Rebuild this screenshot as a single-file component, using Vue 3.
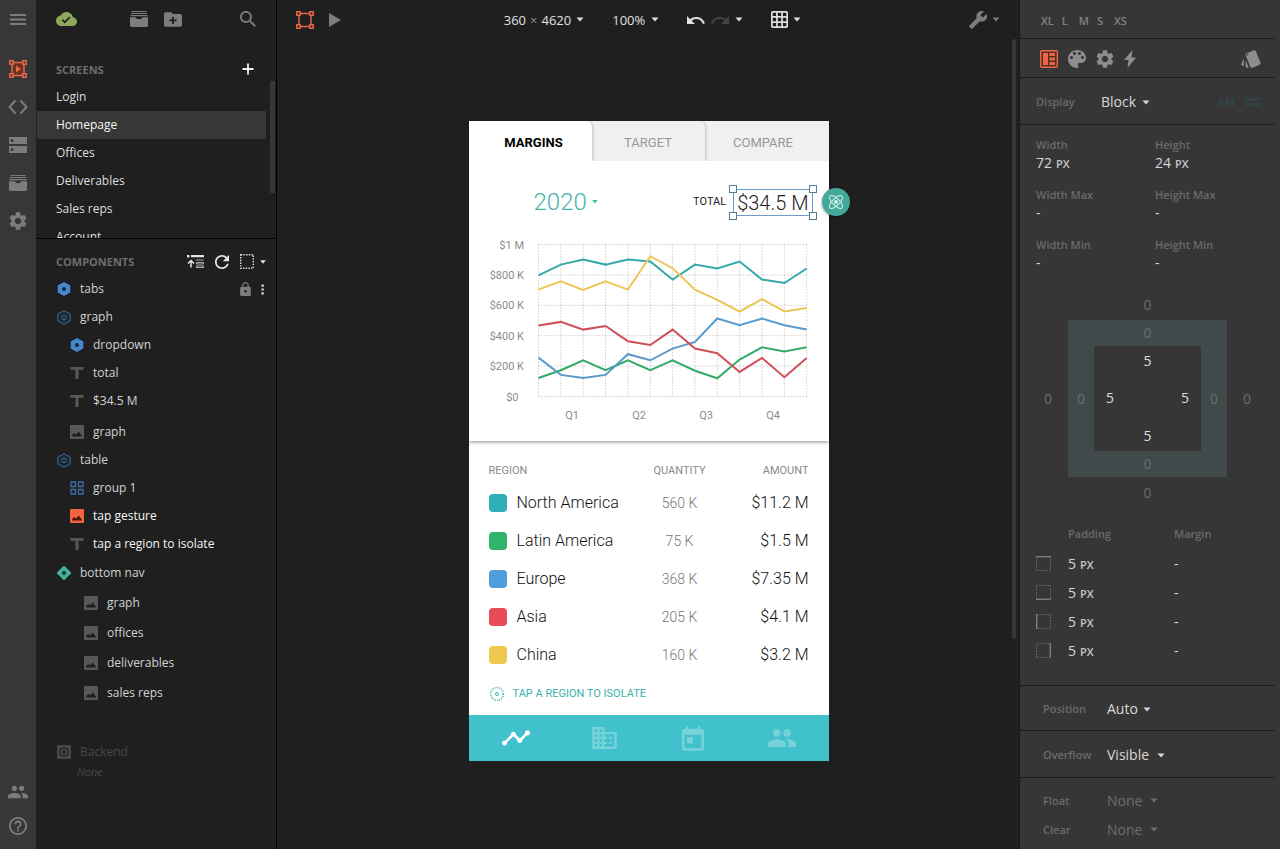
<template>
  <div class="editor">
    <!-- left rail -->
    <nav class="rail" aria-label="Workspace">
      <button class="rail-btn first" aria-label="Menu"><Icon name="menu" /></button>
      <button class="rail-btn active" aria-label="Design"><Icon name="design" /></button>
      <button class="rail-btn" aria-label="Code"><Icon name="code" /></button>
      <button class="rail-btn" aria-label="Data"><Icon name="data" /></button>
      <button class="rail-btn" aria-label="Library"><Icon name="drawer" /></button>
      <button class="rail-btn" aria-label="Settings"><Icon name="gear" /></button>
      <div class="rail-bottom">
        <button class="rail-btn low" aria-label="Team"><Icon name="people" /></button>
        <button class="rail-btn low" aria-label="Help"><Icon name="help" /></button>
      </div>
    </nav>

    <!-- screens + components -->
    <aside class="explorer">
      <header class="explorer-top">
        <button class="cloud" aria-label="Saved"><Icon name="cloud" /></button>
        <div class="explorer-mid">
          <button aria-label="Library"><Icon name="drawer" /></button>
          <button aria-label="New folder"><Icon name="folder" /></button>
        </div>
        <button aria-label="Search"><Icon name="search" /></button>
      </header>

      <section class="screens">
        <div class="section-head">
          <h2>SCREENS</h2>
          <button class="add" aria-label="Add screen"><Icon name="plus" /></button>
        </div>
        <ul class="screen-list">
          <li v-for="s in screens" :key="s">
            <button class="screen" :class="{ selected: s === current }" @click="current = s">{{ s }}</button>
          </li>
        </ul>
        <span class="thumb"></span>
      </section>

      <section class="components">
        <div class="section-head">
          <h2>COMPONENTS</h2>
          <div class="head-tools">
            <button aria-label="Collapse"><Icon name="collapse" /></button>
            <button aria-label="Refresh"><Icon name="refresh" /></button>
            <button class="with-caret" aria-label="Selection"><Icon name="marquee" /><Icon name="caretSmall" /></button>
          </div>
        </div>
        <ul class="tree">
          <li
            v-for="n in nodes"
            :key="n.id"
            class="node"
            :class="['level-' + n.level, n.icon, { bright: n.bright, hot: n.hot, loose: n.loose, spaced: n.spaced }]"
          >
            <Icon :name="n.icon" class="node-icon" />
            <span>{{ n.label }}</span>
            <span v-if="n.locked" class="node-tools">
              <Icon name="lock" />
              <Icon name="dots" class="dots" />
            </span>
          </li>
        </ul>
        <div class="backend">
          <div class="backend-title"><Icon name="backend" /><span>Backend</span></div>
          <em>None</em>
        </div>
      </section>
    </aside>

    <!-- canvas -->
    <main class="canvas">
      <div class="toolbar">
        <div class="tools-left">
          <button class="orange" aria-label="Edit"><Icon name="artboard" /></button>
          <button class="dim" aria-label="Preview"><Icon name="play" /></button>
        </div>
        <div class="tools-center">
          <button class="tool-text">360 <span class="times">×</span> 4620<Icon name="caret" /></button>
          <span class="pick zoom">
            <select aria-label="Zoom"><option>100%</option><option>50%</option></select>
            <Icon name="caret" />
          </span>
          <div class="history">
            <button aria-label="Undo"><Icon name="undo" /></button>
            <button class="faint" aria-label="Redo"><Icon name="redo" /></button>
            <button aria-label="History"><Icon name="caret" /></button>
          </div>
          <button class="grid-btn" aria-label="Grid"><Icon name="grid" /><Icon name="caret" /></button>
        </div>
        <div class="tools-right">
          <button class="dim wrench" aria-label="Tools"><Icon name="wrench" /><Icon name="caret" /></button>
        </div>
      </div>

      <div class="stage">
        <div class="phone">
          <div class="card">
            <div class="tabs">
              <button class="tab on">MARGINS</button>
              <button class="tab">TARGET</button>
              <button class="tab">COMPARE</button>
            </div>
            <div class="summary">
              <button class="year">2020<Icon name="caretTiny" /></button>
              <div class="total">
                <span class="total-label">TOTAL</span>
                <span class="picked">$34.5 M
                  <i class="handle tl"></i><i class="handle tr"></i>
                  <i class="handle bl"></i><i class="handle br"></i>
                </span>
              </div>
              <button class="badge" aria-label="Interaction"><Icon name="atom" /></button>
            </div>
            <svg class="chart" viewBox="0 0 360 210">
              <g class="grid-lines">
                <line v-for="i in 6" :key="'h' + i" :x1="plot.x" :x2="plot.x + 12 * plot.dx" :y1="gridY(i - 1)" :y2="gridY(i - 1)" />
                <line v-for="i in 13" :key="'v' + i" :x1="plotX(i - 1)" :x2="plotX(i - 1)" :y1="plot.y" :y2="plot.y + plot.h" />
              </g>
              <text v-for="(t, i) in yTicks" :key="t" x="55" :y="gridY(i) + 4" text-anchor="end">{{ t }}</text>
              <text v-for="(q, i) in quarters" :key="q" :x="plotX(1.5 + i * 3)" y="188" text-anchor="middle">{{ q }}</text>
              <polyline v-for="s in series" :key="s.color" :points="toPoints(s.values)" :stroke="s.color" />
            </svg>
          </div>

          <div class="regions">
            <table>
              <thead>
                <tr><th class="c-region">REGION</th><th class="c-qty">QUANTITY</th><th class="c-amt">AMOUNT</th></tr>
              </thead>
              <tbody>
                <tr v-for="r in regions" :key="r.name">
                  <td class="c-region">
                    <span class="region-name"><span class="swatch" :style="{ background: r.color }"></span>{{ r.name }}</span>
                  </td>
                  <td class="c-qty">{{ r.quantity }}</td>
                  <td class="c-amt">{{ r.amount }}</td>
                </tr>
              </tbody>
            </table>
            <p class="hint"><Icon name="tap" />TAP A REGION TO ISOLATE</p>
          </div>

          <nav class="bottom-nav" aria-label="App">
            <button class="current" aria-label="Graph"><Icon name="timeline" /></button>
            <button aria-label="Offices"><Icon name="domain" /></button>
            <button aria-label="Deliverables"><Icon name="today" /></button>
            <button aria-label="Sales reps"><Icon name="people" :width="28" :height="18" /></button>
          </nav>
        </div>
      </div>
      <span class="canvas-thumb"></span>
    </main>

    <!-- inspector -->
    <aside class="inspector">
      <div class="sizes">
        <button v-for="s in sizes" :key="s">{{ s }}</button>
      </div>
      <div class="panels">
        <button class="orange" aria-label="Layout"><Icon name="layout" /></button>
        <button aria-label="Style"><Icon name="palette" /></button>
        <button aria-label="Settings"><Icon name="gear" /></button>
        <button aria-label="Actions"><Icon name="bolt" /></button>
        <button class="push" aria-label="Swatches"><Icon name="swatches" /></button>
      </div>
      <div class="row display-row">
        <label for="display">Display</label>
        <span class="pick">
          <select id="display"><option>Block</option><option>Flex</option></select>
          <Icon name="caret" />
        </span>
        <span class="flow-icons"><Icon name="columns" /><Icon name="rows" /></span>
      </div>

      <div class="box">
        <div class="dims">
          <div v-for="d in dims" :key="d.label" class="dim-field">
            <label :for="d.id">{{ d.label }}</label>
            <span class="value">
              <input :id="d.id" :value="d.value" /><span v-if="d.value !== '-'" class="unit">PX</span>
            </span>
          </div>
        </div>

        <div class="model outer">
          <input v-for="s in sides" :key="s" :class="s" value="0" :aria-label="'Offset ' + s" />
          <div class="model margin">
            <input v-for="s in sides" :key="s" :class="s" value="0" :aria-label="'Margin ' + s" />
            <div class="model padding">
              <input v-for="s in sides" :key="s" :class="s" value="5" :aria-label="'Padding ' + s" />
            </div>
          </div>
        </div>

        <table class="spacing">
          <thead>
            <tr><th class="s-icon"></th><th class="s-pad">Padding</th><th>Margin</th></tr>
          </thead>
          <tbody>
            <tr v-for="s in ['top', 'bottom', 'left', 'right']" :key="s">
              <td><Icon :name="s" class="side-icon" /></td>
              <td><span class="value"><input class="one" value="5" :aria-label="'Padding ' + s" /><span class="unit">PX</span></span></td>
              <td class="s-margin"><input class="one" value="-" :aria-label="'Margin ' + s" /></td>
            </tr>
          </tbody>
        </table>
      </div>

      <div class="row position-row">
        <label for="position">Position</label>
        <span class="pick">
          <select id="position"><option>Auto</option></select>
          <Icon name="caret" />
        </span>
      </div>
      <div class="row overflow-row">
        <label for="overflow">Overflow</label>
        <span class="pick">
          <select id="overflow"><option>Visible</option></select>
          <Icon name="caret" />
        </span>
      </div>
      <div class="floats">
        <div class="row">
          <label for="float">Float</label>
          <span class="pick off">
            <select id="float"><option>None</option><option>Left</option></select>
            <Icon name="caret" />
          </span>
        </div>
        <div class="row">
          <label for="clear">Clear</label>
          <span class="pick off">
            <select id="clear"><option>None</option><option>Left</option></select>
            <Icon name="caret" />
          </span>
        </div>
      </div>
    </aside>
  </div>
</template>

<script setup>
import { h, ref } from 'vue'

const p = (d) => `<path d="${d}"/>`

// dotted square with one solid edge
const edge = (d) => [
  15, 15, '0 0 15 15',
  `<g fill="none" stroke="currentColor"><path d="M.5.5h14v14H.5z" stroke-dasharray="1.500 1.300" opacity=".8"/><path d="${d}" stroke-width="1.500"/></g>`,
]

// name: [width, height, viewBox, body]
const icons = {
  menu: [16, 11, '0 0 16 11', p('M0 0h16v2H0zM0 4.5h16v2H0zM0 9h16v2H0z')],
  design: [18, 18, '0 0 18 18', '<path d="M3 2h12v14H3z" fill="#6b3224"/><path d="M3 4v10M15 4v10M4 2.500h10M4 15.500h10" fill="none" stroke="currentColor" stroke-width="1.500"/><path d="M.8.8h3.400v3.400H.8zM13.800.8h3.400v3.400h-3.400zM.8 13.800h3.400v3.400H.8zM13.800 13.800h3.400v3.400h-3.400z" fill="#373737" stroke="currentColor" stroke-width="1.500"/><path d="M7 5.500v7l5-3.500z"/>'],
  artboard: [18, 18, '0 0 18 18', '<path d="M3 4v10M15 4v10M4 2.500h10M4 15.500h10" fill="none" stroke="currentColor" stroke-width="1.400"/><path d="M.8.8h3.400v3.400H.8zM13.800.8h3.400v3.400h-3.400zM.8 13.800h3.400v3.400H.8zM13.800 13.800h3.400v3.400h-3.400z" fill="#1f1f1f" stroke="currentColor" stroke-width="1.500"/>'],
  code: [20, 16, '0 0 20 16', '<path d="M7.500 1.500L1.500 8l6 6.500M12.500 1.500l6 6.500-6 6.500" fill="none" stroke="currentColor" stroke-width="2"/>'],
  data: [18, 16, '0 0 18 16', '<path fill-rule="evenodd" d="M0 0h18v7H0zM3 2a1.500 1.500 0 100 3 1.500 1.500 0 000-3zM0 9h18v7H0zM3 11a1.500 1.500 0 100 3 1.500 1.500 0 000-3z"/>'],
  drawer: [18, 16, '0 0 18 16', p('M1.500 0h15v1h-15zM1 2h16v1H1zM.5 4h17v1.200H.5zM0 6.200h5.500c1 2.600 6 2.600 7 0H18V15l-1 1H1l-1-1z')],
  gear: [18, 18, '2 2 20 20', p('M19.140 12.940c.04-.3.060-.61.060-.94 0-.32-.02-.64-.07-.94l2.030-1.580c.18-.14.230-.41.120-.61l-1.920-3.320c-.12-.22-.37-.29-.59-.22l-2.390.96c-.5-.38-1.030-.7-1.620-.94l-.36-2.540c-.04-.24-.24-.41-.48-.41h-3.840c-.24 0-.43.17-.47.41l-.36 2.540c-.59.24-1.130.57-1.620.94l-2.390-.96c-.22-.08-.47 0-.59.22L2.740 8.870c-.12.21-.08.47.12.61l2.030 1.580c-.05.3-.09.63-.09.94s.02.64.07.94l-2.030 1.580c-.18.14-.23.41-.12.61l1.920 3.320c.12.22.37.29.59.22l2.390-.96c.5.38 1.030.7 1.620.94l.36 2.540c.05.24.24.41.48.41h3.840c.24 0 .44-.17.47-.41l.36-2.540c.59-.24 1.130-.56 1.620-.94l2.390.96c.22.08.47 0 .59-.22l1.920-3.320c.12-.22.07-.47-.12-.61l-2.010-1.580zM12 15.600c-1.980 0-3.600-1.620-3.600-3.600s1.620-3.600 3.600-3.600 3.600 1.620 3.600 3.600-1.620 3.600-3.600 3.600z')],
  people: [20, 14, '1 5 22 14', p('M16 11c1.660 0 2.990-1.340 2.990-3S17.660 5 16 5c-1.660 0-3 1.340-3 3s1.340 3 3 3zm-8 0c1.660 0 2.990-1.340 2.990-3S9.660 5 8 5C6.340 5 5 6.340 5 8s1.340 3 3 3zm0 2c-2.330 0-7 1.170-7 3.500V19h14v-2.500c0-2.330-4.670-3.500-7-3.500zm8 0c-.29 0-.62.02-.97.05 1.160.84 1.970 1.970 1.970 3.450V19h6v-2.500c0-2.330-4.670-3.500-7-3.500z')],
  help: [18, 18, '2 2 20 20', p('M11 18h2v-2h-2v2zm1-16C6.480 2 2 6.480 2 12s4.480 10 10 10 10-4.480 10-10S17.520 2 12 2zm0 18c-4.410 0-8-3.590-8-8s3.590-8 8-8 8 3.590 8 8-3.590 8-8 8zm0-14c-2.210 0-4 1.790-4 4h2c0-1.100.9-2 2-2s2 .9 2 2c0 2-3 1.750-3 5h2c0-2.250 3-2.500 3-5 0-2.210-1.790-4-4-4z')],
  cloud: [21, 14, '0 4 24 16', p('M19.350 10.040C18.670 6.590 15.640 4 12 4 9.110 4 6.600 5.640 5.350 8.040 2.340 8.360 0 10.910 0 14c0 3.310 2.690 6 6 6h13c2.760 0 5-2.240 5-5 0-2.640-2.050-4.780-4.650-4.960zM10 17l-3.500-3.500 1.410-1.410L10 14.170 15.180 9l1.410 1.410L10 17z')],
  folder: [18, 15, '2 4 20 16', p('M20 6h-8l-2-2H4c-1.110 0-2 .89-2 2v12c0 1.110.89 2 2 2h16c1.110 0 2-.89 2-2V8c0-1.110-.89-2-2-2zm-4 8h-3v3h-2v-3H8v-2h3V9h2v3h3v2z')],
  search: [16, 16, '3 3 17.5 17.5', p('M15.500 14h-.79l-.28-.27C15.410 12.590 16 11.110 16 9.500 16 5.910 13.090 3 9.500 3S3 5.910 3 9.500 5.910 16 9.500 16c1.610 0 3.090-.59 4.230-1.570l.27.28v.79l5 4.990L20.490 19l-4.990-5zm-6 0C7.010 14 5 11.990 5 9.500S7.010 5 9.500 5 14 7.010 14 9.500 11.990 14 9.500 14z')],
  plus: [12, 12, '0 0 12 12', p('M5.100 .5h1.800V5.100h4.600v1.800H6.900v4.600H5.100V6.900H.5V5.100h4.600z')],
  collapse: [17, 13, '0 0 17 13', '<path d="M0 0h2.500v2.500H0zM4 0h13v2.200H4z"/><path d="M4 12.500V6M1 8.500L4 5.500l3 3" fill="none" stroke="currentColor" stroke-width="1.500"/><path d="M9 5h7.500M9.500 7.500h7v1.500h-7zM9.500 11h7v1.500h-7z" fill="none" stroke="currentColor" opacity=".7"/>'],
  refresh: [14, 14, '4 4 16 16', p('M17.650 6.350C16.200 4.900 14.210 4 12 4c-4.420 0-7.990 3.580-7.990 8s3.570 8 7.990 8c3.730 0 6.840-2.550 7.730-6h-2.080c-.82 2.330-3.040 4-5.650 4-3.310 0-6-2.690-6-6s2.690-6 6-6c1.660 0 3.140.69 4.220 1.780L13 11h7V4l-2.350 2.350z')],
  marquee: [14, 15, '0 0 14 15', '<path d="M.7.7h12.600v13.600H.7z" fill="none" stroke="currentColor" stroke-width="1.400" stroke-dasharray="1.400 1.300"/>'],
  caret: [8, 5, '0 0 8 5', p('M.5.5h7L4 4.500z')],
  caretSmall: [6, 4, '0 0 6 4', p('M.2.3h5.600L3 3.700z')],
  caretTiny: [6, 4, '0 0 6 4', p('M.3 0h5.400L3 3.500z')],
  hex: [14, 14, '0 0 14 14', '<path d="M7 0l6.300 3.500v7L7 14 .7 10.500v-7z"/><circle cx="7" cy="7" r="2" fill="#16273a"/>'],
  hexOutline: [14, 15, '0 0 14 15', '<path d="M7 .7l6.200 3.400v6.800L7 14.300.8 10.900V4.100z" fill="#1c2a38" stroke="currentColor"/><circle cx="7" cy="7.500" r="2.200" fill="none" stroke="currentColor"/>'],
  letter: [14, 12, '0 0 14 12', p('M.5 0h13v2.700H8.500V12h-3V2.700h-5z')],
  image: [14, 14, '0 0 14 14', '<rect width="14" height="14" rx="1"/><path d="M2.200 11.500V10l2-2 1.800 1.500L8.700 6.500l3.100 4v1z" class="hill"/>'],
  group: [14, 14, '0 0 14 14', '<path d="M1 1h4.500v4.500H1zM8.500 1H13v4.500H8.500zM1 8.500h4.500V13H1zM8.500 8.500H13V13H8.500z" fill="none" stroke="currentColor" stroke-width="1.300"/>'],
  diamond: [14, 14, '0 0 14 14', '<path d="M7 1l6 6-6 6-6-6z" stroke="currentColor" stroke-width="2" stroke-linejoin="round"/><circle cx="7" cy="7" r="2" fill="#143330"/>'],
  lock: [11, 14, '4 1 16 21', p('M18 8h-1V6c0-2.760-2.240-5-5-5S7 3.240 7 6v2H6c-1.100 0-2 .9-2 2v10c0 1.100.9 2 2 2h12c1.100 0 2-.9 2-2V10c0-1.100-.9-2-2-2zm-6 9c-1.100 0-2-.9-2-2s.9-2 2-2 2 .9 2 2-.9 2-2 2zm3.100-9H8.900V6c0-1.710 1.390-3.100 3.100-3.100 1.710 0 3.100 1.390 3.100 3.100v2z')],
  dots: [3, 11, '0 0 3 11', p('M.5.5h2.200v2.200H.5zM.5 4.400h2.200v2.200H.5zM.5 8.300h2.200v2.200H.5z')],
  backend: [14, 14, '0 0 14 14', '<rect width="14" height="14"/><path d="M7 1.800l1.500 1.500 2.800-.1-.2 2.600L12.300 7l-1.200 1.200.2 2.600-2.800-.1L7 12.200l-1.500-1.500-2.800.1.200-2.600L1.700 7l1.200-1.200-.2-2.600 2.800.1z" fill="#1f1f1f"/><path fill-rule="evenodd" d="M7 3.500a3.500 3.500 0 100 7 3.500 3.500 0 000-7zM7 5.500a1.500 1.500 0 110 3 1.500 1.500 0 010-3z"/>'],
  play: [12, 14, '0 0 12 14', p('M0 0l12 7-12 7z')],
  undo: [18, 8, '2 7 20.500 9', p('M12.500 8c-2.650 0-5.050.99-6.900 2.600L2 7v9h9l-3.620-3.620c1.390-1.160 3.160-1.880 5.120-1.880 3.540 0 6.550 2.310 7.600 5.500l2.370-.78C21.080 11.030 17.150 8 12.500 8z')],
  redo: [18, 8, '1.5 7 20.500 9', p('M18.400 10.600C16.550 8.990 14.150 8 11.500 8c-4.650 0-8.580 3.030-9.960 7.220L3.900 16c1.050-3.190 4.050-5.500 7.600-5.500 1.950 0 3.730.72 5.120 1.880L13 16h9V7l-3.600 3.600z')],
  grid: [17, 17, '2 2 20 20', p('M20 2H4c-1.100 0-2 .9-2 2v16c0 1.100.9 2 2 2h16c1.100 0 2-.9 2-2V4c0-1.100-.9-2-2-2zM8 20H4v-4h4v4zm0-6H4v-4h4v4zm0-6H4V4h4v4zm6 12h-4v-4h4v4zm0-6h-4v-4h4v4zm0-6h-4V4h4v4zm6 12h-4v-4h4v4zm0-6h-4v-4h4v4zm0-6h-4V4h4v4z')],
  wrench: [18, 18, '1 1 22 22', '<path transform="translate(24 0) scale(-1 1)" d="M22.700 19l-9.100-9.100c.9-2.300.4-5-1.500-6.900-2-2-5-2.400-7.400-1.300L9 6 6 9 1.600 4.700C.4 7.100.9 10.100 2.900 12.100c1.900 1.900 4.600 2.400 6.900 1.500l9.100 9.100c.4.4 1 .4 1.400 0l2.300-2.300c.5-.4.5-1.100.1-1.400z"/>'],
  atom: [16, 16, '0 0 16 16', '<g fill="none" stroke="currentColor"><ellipse cx="8" cy="8" rx="8.500" ry="3.500" transform="rotate(45 8 8)"/><ellipse cx="8" cy="8" rx="8.500" ry="3.500" transform="rotate(-45 8 8)"/></g><circle cx="8" cy="8" r="2"/>'],
  tap: [16, 16, '0 0 16 16', '<circle cx="8" cy="8" r="6.300" fill="none" stroke="currentColor" stroke-width="1.800" stroke-dasharray=".9 1.300"/><circle cx="8" cy="8" r="1.500" fill="none" stroke="currentColor"/>'],
  timeline: [28, 16, '1 6 22 12', p('M23 8c0 1.100-.9 2-2 2-.18 0-.35-.02-.51-.07l-3.560 3.550c.05.16.07.34.07.52 0 1.100-.9 2-2 2s-2-.9-2-2c0-.18.02-.36.07-.52l-2.550-2.550c-.16.05-.34.07-.52.07s-.36-.02-.52-.07l-4.550 4.560c.05.16.07.33.07.51 0 1.100-.9 2-2 2s-2-.9-2-2 .9-2 2-2c.18 0 .35.02.51.07l4.560-4.550C8.020 9.360 8 9.180 8 9c0-1.100.9-2 2-2s2 .9 2 2c0 .18-.02.36-.07.52l2.550 2.550c.16-.05.34-.07.52-.07s.36.02.52.07l3.550-3.560C19.020 8.350 19 8.180 19 8c0-1.100.9-2 2-2s2 .9 2 2z')],
  domain: [25, 22, '2 3 20 18', p('M12 7V3H2v18h20V7H12zM6 19H4v-2h2v2zm0-4H4v-2h2v2zm0-4H4V9h2v2zm0-4H4V5h2v2zm4 12H8v-2h2v2zm0-4H8v-2h2v2zm0-4H8V9h2v2zm0-4H8V5h2v2zm10 12h-8v-2h2v-2h-2v-2h2v-2h-2V9h8v10zm-2-8h-2v2h2v-2zm0 4h-2v2h2v-2z')],
  today: [22, 25, '3 1 18 20', p('M19 3h-1V1h-2v2H8V1H6v2H5c-1.110 0-2 .9-2 2v14c0 1.100.89 2 2 2h14c1.100 0 2-.9 2-2V5c0-1.100-.9-2-2-2zm0 16H5V8h14v11zM7 10h5v5H7z')],
  layout: [18, 18, '0 0 18 18', '<rect x=".7" y=".7" width="16.600" height="16.600" rx="1" fill="#5b2c20" stroke="currentColor" stroke-width="1.400"/><path d="M3 3h5v12H3zM9.500 3H15v3H9.500zM9.500 7.500H15v3H9.500zM9.500 12H15v3H9.500z"/>'],
  palette: [18, 18, '3 3 18 18', p('M12 3c-4.970 0-9 4.030-9 9s4.030 9 9 9c.83 0 1.500-.67 1.500-1.500 0-.39-.15-.74-.39-1.010-.23-.26-.38-.61-.38-.99 0-.83.67-1.500 1.500-1.500H16c2.760 0 5-2.240 5-5 0-4.420-4.030-8-9-8zm-5.500 9c-.83 0-1.500-.67-1.500-1.500S5.670 9 6.500 9 8 9.670 8 10.500 7.330 12 6.500 12zm3-4C8.670 8 8 7.330 8 6.500S8.670 5 9.500 5s1.500.67 1.500 1.500S10.330 8 9.500 8zm5 0c-.83 0-1.500-.67-1.500-1.500S13.670 5 14.500 5s1.500.67 1.500 1.500S15.330 8 14.500 8zm3 4c-.83 0-1.500-.67-1.500-1.500S16.670 9 17.500 9s1.500.67 1.500 1.500-.67 1.500-1.500 1.500z')],
  bolt: [12, 18, '0 0 12 18', p('M8.500 0L0 10h4.500L3.500 18 12 7.500H7.500z')],
  swatches: [20, 18, '1 2.500 21.500 19.500', p('M2.530 19.650l1.340.56v-9.030l-2.430 5.860c-.41 1.020.08 2.190 1.090 2.610zm19.500-3.700L17.070 3.980c-.31-.75-1.040-1.210-1.810-1.230-.26 0-.53.04-.79.15L7.100 5.950c-.75.31-1.210 1.030-1.230 1.800-.01.27.04.54.15.8l4.960 11.970c.31.76 1.050 1.220 1.830 1.230.26 0 .52-.05.77-.15l7.360-3.050c1.020-.42 1.510-1.590 1.090-2.600zM7.880 8.750c-.55 0-1-.45-1-1s.45-1 1-1 1 .45 1 1-.45 1-1 1zm-2 11c0 1.100.9 2 2 2h1.450l-3.450-8.340v6.340z')],
  columns: [16, 10, '0 0 16 10', p('M0 1h4v8H0zM6 1h4v8H6zM12 1h4v8h-4z')],
  rows: [16, 10, '0 0 16 10', p('M0 1h16v3H0zM0 6h16v3H0z')],
  top: edge('M0 .7h15'),
  bottom: edge('M0 14.300h15'),
  left: edge('M.7 0v15'),
  right: edge('M14.300 0v15'),
}

const Icon = (props) => {
  const [w, hgt, box, body] = icons[props.name]
  return h('svg', {
    width: props.width || w,
    height: props.height || hgt,
    viewBox: box,
    fill: 'currentColor',
    'aria-hidden': 'true',
    innerHTML: body,
  })
}
Icon.props = ['name', 'width', 'height']

const current = ref('Homepage')
const screens = ['Login', 'Homepage', 'Offices', 'Deliverables', 'Sales reps', 'Account']

const nodes = [
  { id: 1, level: 0, icon: 'hex', label: 'tabs', locked: true },
  { id: 2, level: 0, icon: 'hexOutline', label: 'graph' },
  { id: 3, level: 1, icon: 'hex', label: 'dropdown' },
  { id: 4, level: 1, icon: 'letter', label: 'total' },
  { id: 5, level: 1, icon: 'letter', label: '$34.5 M' },
  { id: 6, level: 1, icon: 'image', label: 'graph', spaced: true },
  { id: 7, level: 0, icon: 'hexOutline', label: 'table' },
  { id: 8, level: 1, icon: 'group', label: 'group 1' },
  { id: 9, level: 1, icon: 'image', label: 'tap gesture', bright: true, hot: true },
  { id: 10, level: 1, icon: 'letter', label: 'tap a region to isolate', bright: true },
  { id: 11, level: 0, icon: 'diamond', label: 'bottom nav', loose: true },
  { id: 12, level: 2, icon: 'image', label: 'graph', loose: true },
  { id: 13, level: 2, icon: 'image', label: 'offices', loose: true },
  { id: 14, level: 2, icon: 'image', label: 'deliverables', loose: true },
  { id: 15, level: 2, icon: 'image', label: 'sales reps', loose: true },
]

const plot = { x: 69.5, y: 13.5, dx: 22.35, h: 152 }
const plotX = (i) => plot.x + i * plot.dx
const gridY = (i) => plot.y + (i * plot.h) / 5
const toPoints = (values) =>
  values.map((v, i) => `${plotX(i).toFixed(1)},${(plot.y + plot.h * (1 - v / 1000)).toFixed(1)}`).join(' ')

const yTicks = ['$1 M', '$800 K', '$600 K', '$400 K', '$200 K', '$0\u00a0\u00a0']
const quarters = ['Q1', 'Q2', 'Q3', 'Q4']
const series = [
  { color: '#34aa68', values: [122, 173, 238, 173, 238, 173, 238, 170, 120, 243, 324, 296, 324] },
  { color: '#5a9bce', values: [256, 142, 122, 142, 278, 238, 315, 359, 513, 469, 513, 469, 440] },
  { color: '#cf505a', values: [467, 491, 440, 464, 364, 339, 440, 315, 284, 162, 254, 126, 254] },
  { color: '#35a9aa', values: [797, 868, 901, 868, 901, 888, 769, 868, 842, 888, 769, 747, 842] },
  { color: '#ebc656', values: [703, 758, 701, 758, 703, 923, 844, 703, 636, 559, 640, 559, 583] },
]

const regions = [
  { name: 'North America', color: '#2fb0b9', quantity: '560 K', amount: '$11.2 M' },
  { name: 'Latin America', color: '#2fb46b', quantity: '75 K', amount: '$1.5 M' },
  { name: 'Europe', color: '#4f9ddb', quantity: '368 K', amount: '$7.35 M' },
  { name: 'Asia', color: '#e74c57', quantity: '205 K', amount: '$4.1 M' },
  { name: 'China', color: '#efc84f', quantity: '160 K', amount: '$3.2 M' },
]

const sizes = ['XL', 'L', 'M', 'S', 'XS']
const sides = ['top', 'left', 'right', 'bottom']
const dims = [
  { id: 'width', label: 'Width', value: '72' },
  { id: 'height', label: 'Height', value: '24' },
  { id: 'width-max', label: 'Width Max', value: '-' },
  { id: 'height-max', label: 'Height Max', value: '-' },
  { id: 'width-min', label: 'Width Min', value: '-' },
  { id: 'height-min', label: 'Height Min', value: '-' },
]
</script>

<style>
body { margin: 0; background: #1f1f1f; }
</style>

<style scoped>
.editor {
  display: grid;
  grid-template-columns: 36px 241px minmax(0, 1fr) 260px;
  min-height: 100vh;
  background: #1f1f1f; color: #dcdcdc;
  font-family: "Open Sans", "Noto Sans", sans-serif;
  font-size: 12px; line-height: 16px;
}
.editor * { box-sizing: border-box; }
svg { display: block; flex: none; }
ul { list-style: none; margin: 0; padding: 0; }
h2 { margin: 0; font-size: 11px; font-weight: 700; color: #6e6e6e; }
button, input, select { font: inherit; color: inherit; background: none; border: none; padding: 0; margin: 0; }
button { display: flex; align-items: center; cursor: pointer; }
select { appearance: none; outline: none; }
.orange { color: #e8674a; }
.dim { color: #7d7d7d; }
.faint { color: #444; }

/* rail */
.rail { display: flex; flex-direction: column; background: #373737; color: #7c7c7c; padding-bottom: 6px; }
.rail-btn { width: 36px; height: 38px; justify-content: center; }
.rail-btn.first { margin-bottom: 12px; }
.rail-btn.active { color: #e8674a; }
.rail-btn.low { height: 34px; }
.rail-bottom { margin-top: auto; }

/* explorer */
.explorer { border-right: 1px solid #000; }
.explorer-top { display: flex; align-items: center; height: 38px; padding: 0 20px; color: #7d7d7d; }
.cloud { color: #8fa95c; }
.explorer-mid { display: flex; gap: 16px; margin: 0 auto 0 53px; }
.screens { position: relative; border-bottom: 1px solid #000; padding-top: 17px; }
.section-head { display: flex; align-items: center; justify-content: space-between; height: 28px; padding: 0 22px 0 20px; }
.screens h2 { padding-top: 1px; }
.add { color: #f0f0f0; }
.screen-list { height: 155px; overflow: hidden; }
.screen { width: 229px; height: 28px; margin-left: 1px; padding-left: 19px; color: #dedede; }
.screen.selected { background: #373737; color: #f4f4f4; }
.thumb { position: absolute; top: 43px; right: 1px; width: 5px; height: 112px; background: #373737; }
.components { padding-top: 9px; }
.components .section-head { height: 27px; padding-right: 10px; }
.head-tools { display: flex; align-items: center; gap: 11px; color: #e4e4e4; }
.with-caret { gap: 6px; }
.node { display: flex; align-items: center; gap: 9px; height: 28px; padding: 0 12px 0 21px; color: #d2d2d2; }
.node.loose { height: 30px; }
.node.spaced { margin-top: 3px; }
.node.level-1 { padding-left: 34px; }
.node.level-2 { padding-left: 48px; }
.node.bright { color: #f6f6f6; }
.node-icon { width: 14px; color: #585858; }
.node-icon :deep(.hill) { fill: #1f1f1f; }
.hex .node-icon { color: #4387cd; }
.hexOutline .node-icon { color: #3c6b98; }
.group .node-icon { color: #3a6fa8; }
.diamond .node-icon { color: #45b09e; }
.hot .node-icon { color: #f0643f; }
.hot .node-icon :deep(.hill) { fill: #4a160a; }
.node-tools { display: flex; align-items: center; gap: 10px; margin-left: auto; color: #7d7d7d; }
.dots { color: #e4e4e4; }
.backend { padding: 36px 0 0 21px; color: #484848; }
.backend-title { display: flex; align-items: center; gap: 9px; height: 16px; margin-bottom: 4px; }
.backend em { padding-left: 20px; font-size: 11px; }

/* canvas */
.canvas { position: relative; border-right: 1px solid #1a1a1a; }
.toolbar {
  display: grid; grid-template-columns: 1fr auto 1fr; align-items: center;
  height: 39px; padding: 0 10px 0 19px;
}
.tools-left, .tools-center, .history { display: flex; align-items: center; }
.tools-left { gap: 15px; }
.tools-center { gap: 28px; color: #e0e0e0; font-size: 13px; }
.tool-text { gap: 4px; }
.tool-text svg { margin-left: 1px; }
.times { color: #8a8a8a; }
.history { gap: 6px; }
.grid-btn { gap: 5px; }
.tools-right { display: flex; justify-content: flex-end; padding-right: 9px; }
.wrench { gap: 5px; }
.pick { display: inline-flex; align-items: center; gap: 5px; }
.canvas-thumb { position: absolute; top: 39px; right: 3px; width: 4px; height: 600px; background: #373737; border-radius: 2px; }
.stage { display: flex; justify-content: center; padding: 82px 0 88px 1px; }

/* phone */
.phone { width: 360px; background: #fff; color: #222; font-family: Roboto, sans-serif; }
.card { box-shadow: 0 1px 4px rgba(0, 0, 0, .45); clip-path: inset(0 -24px -8px 0); }
.tabs { display: grid; grid-template-columns: 123px 113px 1fr; height: 40px; background: #f0f0f0; }
.tab { justify-content: center; padding-top: 4px; font-size: 13px; color: #979797; border-radius: 0 6px 0 0; box-shadow: 1px 0 3px rgba(0, 0, 0, .2); clip-path: inset(0 -4px 0 0); }
.tab.on { background: #fff; color: #000; font-weight: 700; padding-left: 7px; }
.tab:last-child { padding-right: 7px; box-shadow: none; }
.summary { position: relative; display: flex; align-items: center; justify-content: space-between; height: 70px; padding: 12px 16px 0 65px; }
.year { gap: 5px; height: 28px; font-size: 24px; font-weight: 300; color: #45b5ab; }
.total { display: flex; align-items: center; gap: 7px; }
.total-label { font-size: 11px; }
.picked { position: relative; height: 27px; padding: 0 3px; border: 1px solid #6f9cc4; font-size: 20px; line-height: 26px; font-weight: 300; white-space: nowrap; }
.handle { position: absolute; width: 8px; height: 8px; background: #fff; border: 1px solid #527f9e; }
.tl { top: -5px; left: -5px; }
.tr { top: -5px; right: -5px; }
.bl { bottom: -5px; left: -5px; }
.br { bottom: -5px; right: -5px; }
.badge {
  position: absolute; top: 27px; right: -21px; width: 28px; height: 28px; justify-content: center;
  border-radius: 50%; background: #42a99b; color: #d5f2ee; box-shadow: 0 1px 3px rgba(0, 0, 0, .4);
}
.chart { width: 100%; }
.chart text { font-size: 11px; fill: #8c8c8c; }
.chart polyline { fill: none; stroke-width: 2; }
.grid-lines line { stroke: #b4b4b4; stroke-dasharray: 1 2; }
.regions { padding: 20px 20px 0; }
table { border-collapse: collapse; }
.regions table { width: 100%; table-layout: fixed; }
.regions th { height: 22px; padding: 0 0 2px; font-size: 11px; font-weight: 400; color: #8a8a8a; }
.regions td { height: 38px; padding: 2px 0 0; font-size: 16px; font-weight: 300; color: #111; }
.c-region { width: 155px; text-align: left; }
.c-qty { width: 72px; text-align: center; }
.c-amt { text-align: right; }
.regions td.c-qty { font-size: 14px; color: #777; }
.region-name { display: flex; align-items: center; gap: 10px; }
.swatch { width: 18px; height: 18px; border-radius: 4px; }
.hint { display: flex; align-items: center; gap: 8px; height: 42px; margin: 0; font-size: 11px; color: #3cb1ac; }
.bottom-nav { display: grid; grid-template-columns: repeat(4, 1fr); height: 46px; padding: 0 2px 0 3px; background: #40c1cb; color: #76d3da; }
.bottom-nav button { justify-content: center; }
.bottom-nav .current { color: #fff; }

/* inspector */
.inspector { background: #363636; color: #d8d8d8; font-size: 14px; line-height: 18px; padding-right: 5px; }
label, .spacing th { font-size: 11px; font-weight: 600; color: #676c6a; }
.sizes, .panels, .row { display: flex; align-items: center; }
.sizes { gap: 8px; height: 39px; padding: 4px 0 0 21px; border-bottom: 1px solid #1d1d1d; font-size: 11px; font-weight: 600; color: #828282; }
.sizes button { min-width: 9px; }
.panels { gap: 10px; height: 39px; padding: 2px 14px 0 20px; border-bottom: 1px solid #1d1d1d; color: #8d8d8d; }
.panels .orange { color: #e8674a; }
.push { margin-left: auto; }
.display-row { height: 47px; padding: 2px 0 0 16px; border-bottom: 1px solid #1d1d1d; }
.display-row label { width: 65px; }
.flow-icons { display: flex; gap: 10px; margin-left: auto; padding-right: 14px; color: #304244; }
.dims { display: grid; grid-template-columns: 119px 119px; row-gap: 14px; padding: 11px 0 0 16px; }
.dim-field { display: flex; flex-direction: column; height: 36px; }
.value { display: flex; align-items: baseline; gap: 4px; }
.value input { width: 16px; height: 18px; }
.unit { font-size: 11px; font-weight: 600; color: #c8c8c8; }
.box { border-bottom: 1px solid #1d1d1d; padding-bottom: 20px; }
.model { display: grid; }
.model input { width: 100%; text-align: center; color: #6a6e6c; }
.outer { grid-template: ". top ." 31px "left core right" 157px ". bottom ." 32px / 40px 159px 40px; padding: 17px 0 0 8px; }
.margin { grid-area: core; grid-template: ". top ." 26px "left core right" 105px ". bottom ." 26px / 26px 107px 26px; background: #414a4a; }
.padding { grid-area: core; grid-template: ". top ." 29px "left core right" 46px ". bottom ." 30px / 32px 43px 32px; background: #363636; }
.padding input { color: #dcdcdc; }
.top { grid-area: top; }
.left { grid-area: left; }
.right { grid-area: right; }
.bottom { grid-area: bottom; }
.spacing { margin: 12px 0 0 16px; }
.spacing th { height: 28px; padding: 0 0 3px; text-align: left; }
.spacing td { height: 29px; padding: 0; }
.spacing .s-icon { width: 32px; }
.spacing .s-pad { width: 106px; }
.spacing .s-margin { text-indent: 0; }
.value .one, .one { width: 8px; height: 20px; }
.side-icon { color: #7c7c7c; }
.position-row, .overflow-row { padding: 2px 0 0 23px; border-bottom: 1px solid #1d1d1d; }
.position-row { height: 45px; }
.overflow-row { height: 47px; }
.position-row label, .overflow-row label, .floats label { width: 64px; }
.floats { padding: 8px 0 0 23px; }
.floats .row { height: 29px; }
.floats .pick, .overflow-row .pick { gap: 7px; }
.off { color: #6e6e6e; }
</style>
